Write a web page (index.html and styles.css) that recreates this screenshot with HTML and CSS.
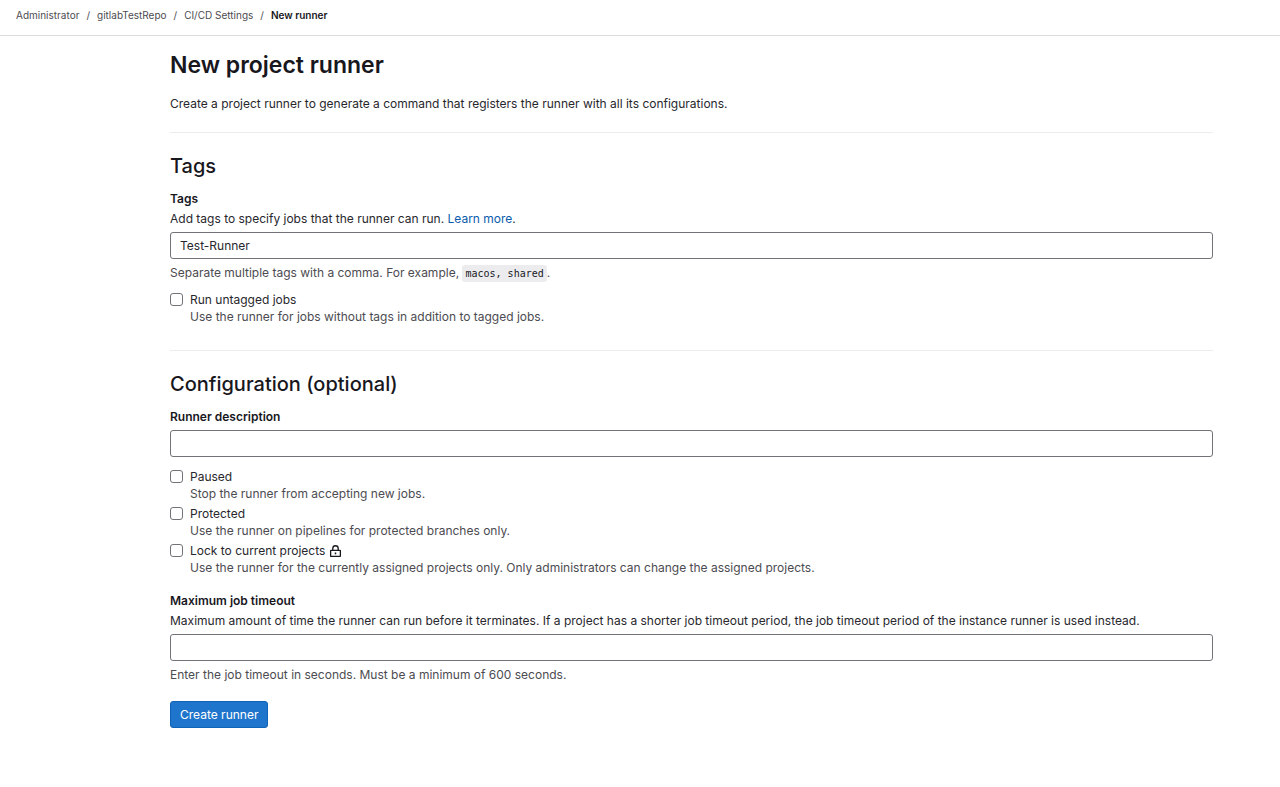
FILE: index.html
```html
<!DOCTYPE html>
<html lang="en">
<head>
<meta charset="UTF-8">
<meta name="viewport" content="width=device-width, initial-scale=1">
<title>New runner · CI/CD Settings</title>
<link rel="stylesheet" href="styles.css">
</head>
<body>
<header class="top-bar">
  <nav aria-label="Breadcrumb">
    <ol class="breadcrumb">
      <li><a href="#">Administrator</a></li>
      <li><a href="#">gitlabTestRepo</a></li>
      <li><a href="#">CI/CD Settings</a></li>
      <li><a href="#" class="current" aria-current="page">New runner</a></li>
    </ol>
  </nav>
</header>

<main class="container">
  <h1>New project runner</h1>
  <p class="intro">Create a project runner to generate a command that registers the runner with all its configurations.</p>

  <form>
    <section class="section">
      <h2>Tags</h2>
      <div class="form-group">
        <label class="label" for="tags">Tags</label>
        <p class="label-description">Add tags to specify jobs that the runner can run. <a href="#">Learn more</a>.</p>
        <input class="form-input" type="text" id="tags" name="tags" value="Test-Runner">
        <p class="help">Separate multiple tags with a comma. For example, <code>macos, shared</code>.</p>
      </div>
      <div class="checkbox">
        <input type="checkbox" id="untagged" name="untagged">
        <label for="untagged">Run untagged jobs</label>
        <p>Use the runner for jobs without tags in addition to tagged jobs.</p>
      </div>
    </section>

    <section class="section">
      <h2>Configuration (optional)</h2>
      <div class="form-group">
        <label class="label" for="description">Runner description</label>
        <input class="form-input" type="text" id="description" name="description">
      </div>
      <div class="checkbox-group">
        <div class="checkbox">
          <input type="checkbox" id="paused" name="paused">
          <label for="paused">Paused</label>
          <p>Stop the runner from accepting new jobs.</p>
        </div>
        <div class="checkbox">
          <input type="checkbox" id="protected" name="protected">
          <label for="protected">Protected</label>
          <p>Use the runner on pipelines for protected branches only.</p>
        </div>
        <div class="checkbox">
          <input type="checkbox" id="locked" name="locked">
          <label for="locked">Lock to current projects
            <svg class="icon" viewBox="0 0 12 12" aria-hidden="true">
              <path d="M3.500 5V3.200a2.500 2.500 0 0 1 5 0V5" fill="none" stroke="currentColor" stroke-width="1.200"/>
              <rect x="1.500" y="5" width="9" height="5.500" rx=".3" fill="none" stroke="currentColor" stroke-width="1.200"/>
              <rect x="5.300" y="6.900" width="1.400" height="1.700" fill="currentColor"/>
            </svg>
          </label>
          <p>Use the runner for the currently assigned projects only. Only administrators can change the assigned projects.</p>
        </div>
      </div>
      <div class="form-group">
        <label class="label" for="timeout">Maximum job timeout</label>
        <p class="label-description">Maximum amount of time the runner can run before it terminates. If a project has a shorter job timeout period, the job timeout period of the instance runner is used instead.</p>
        <input class="form-input" type="text" id="timeout" name="timeout">
        <p class="help">Enter the job timeout in seconds. Must be a minimum of 600 seconds.</p>
      </div>
    </section>

    <button class="btn-confirm" type="submit">Create runner</button>
  </form>
</main>
</body>
</html>
```
FILE: styles.css
```css
* {
  box-sizing: border-box;
}
body {
  margin: 0;
  font-family: Inter, "Noto Sans", sans-serif;
  font-size: 12px;
  line-height: 17px;
  color: #28272d;
  background: #fff;
}
h1, h2, p {
  margin: 0;
}
a {
  color: #0b5cad;
  text-decoration: none;
}
a:hover {
  text-decoration: underline;
}

/* Breadcrumbs */
.top-bar {
  display: flex;
  align-items: center;
  height: 36px;
  padding: 0 16px 4px;
  border-bottom: 1px solid #dcdcde;
}
.breadcrumb {
  display: flex;
  margin: 0;
  padding: 0;
  list-style: none;
  font-size: 10px;
}
.breadcrumb li + li::before {
  content: "/";
  margin: 0 7px;
  color: #4c4b51;
}
.breadcrumb a {
  color: #4c4b51;
}
.breadcrumb .current {
  color: #18171d;
  font-weight: 600;
}

/* Form */
.container {
  max-width: 1075px;
  margin: 0 51px 0 auto;
  padding: 13px 16px 40px;
}
h1 {
  font-size: 23px;
  line-height: 32px;
  font-weight: 600;
  color: #18171d;
}
.intro {
  margin: 14px 0 20px;
}
.section {
  padding: 20px 0 22px;
  border-top: 1px solid #ececef;
}
.section:last-of-type {
  padding-bottom: 8px;
}
h2 {
  margin-bottom: 12px;
  font-size: 20px;
  line-height: 26px;
  font-weight: 500;
  color: #18171d;
}
.form-group {
  margin-bottom: 10px;
}
.label {
  display: block;
  margin-bottom: 3px;
  line-height: 16px;
  font-weight: 600;
  color: #18171d;
}
.label-description {
  margin-bottom: 5px;
}
.form-input {
  display: block;
  width: 100%;
  height: 27px;
  padding: 0 9px;
  border: 1px solid #737278;
  border-radius: 3px;
  font: inherit;
  color: inherit;
  background: #fff;
}
.label + .form-input {
  margin-top: 5px;
}
.help {
  margin-top: 5px;
  color: #4c4b51;
}
code {
  padding: 3px;
  border-radius: 3px;
  font-family: "DejaVu Sans Mono", monospace;
  font-size: 10px;
  line-height: 13px;
  color: #18171d;
  background: #ececef;
}
.checkbox {
  display: grid;
  grid-template-columns: 13px 1fr;
  column-gap: 7px;
  margin-bottom: 3px;
}
.checkbox input {
  appearance: none;
  width: 13px;
  height: 13px;
  margin: 2px 0;
  border: 1px solid #737278;
  border-radius: 3px;
  background: #fff;
}
.checkbox input:checked {
  border-color: #1f75cb;
  background: #1f75cb;
}
.checkbox p {
  grid-column: 2;
  color: #4c4b51;
}
.checkbox-group {
  margin: 11px 0 17px;
}
.icon {
  width: 13px;
  height: 13px;
  vertical-align: middle;
  color: #18171d;
}
.btn-confirm {
  display: block;
  height: 27px;
  padding: 0 9px;
  border: 1px solid #1064b8;
  border-radius: 3px;
  font: inherit;
  color: #fff;
  background: #1f75cb;
  cursor: pointer;
}
.btn-confirm:hover {
  background: #1064b8;
}
```
